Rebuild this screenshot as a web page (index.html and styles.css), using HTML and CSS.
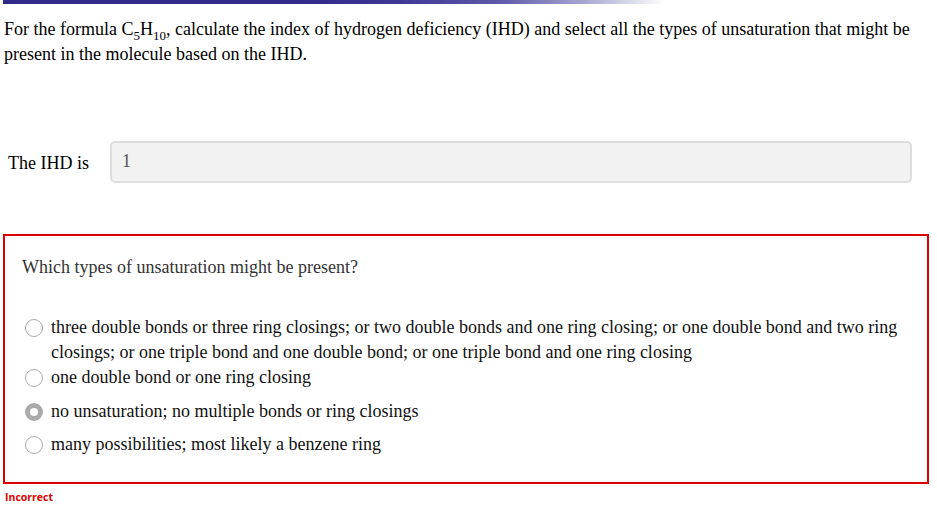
FILE: index.html
```html
<!DOCTYPE html>
<html>
<head>
<meta charset="utf-8">
<link rel="stylesheet" href="styles.css">
</head>
<body>
<div class="page">
  <div class="banner"></div>
  <p class="prompt">For the formula C<sub>5</sub>H<sub>10</sub>, calculate the index of hydrogen deficiency (IHD) and select all the types of unsaturation that might be present in the molecule based on the IHD.</p>
  <div class="ihd-row">
    <span class="ihd-label">The IHD is</span>
    <div class="ihd-input">1</div>
  </div>
  <div class="question">
    <div class="q-title">Which types of unsaturation might be present?</div>
    <ul class="options">
      <li class="option"><span class="radio"></span><span class="opt-text">three double bonds or three ring closings; or two double bonds and one ring closing; or one double bond and two ring closings; or one triple bond and one double bond; or one triple bond and one ring closing</span></li>
      <li class="option"><span class="radio"></span><span class="opt-text">one double bond or one ring closing</span></li>
      <li class="option spaced"><span class="radio checked"></span><span class="opt-text">no unsaturation; no multiple bonds or ring closings</span></li>
      <li class="option spaced"><span class="radio"></span><span class="opt-text">many possibilities; most likely a benzene ring</span></li>
    </ul>
  </div>
  <div class="feedback">Incorrect</div>
</div>
</body>
</html>
```
FILE: styles.css
```css
html, body {
  margin: 0;
  padding: 0;
  background: #fff;
}
body {
  font-family: "Liberation Serif", "Times New Roman", serif;
  font-size: 18px;
  color: #000;
}
.page {
  width: 937px;
  padding: 0 0 0 3px;
  box-sizing: border-box;
}
.banner {
  width: 662px;
  height: 4px;
  background: linear-gradient(to right, #302a8a 0%, #302a8a 45%, #3c3a95 60%, #5d5aa8 75%, #a9a8d2 88%, #ffffff 100%);
}
.prompt {
  margin: 13px 0 0 1px;
  line-height: 25px;
  width: 915px;
}
.prompt sub {
  font-size: 13px;
  vertical-align: -5px;
  line-height: 0;
}
.ihd-row {
  display: flex;
  align-items: center;
  margin-top: 74px;
  padding-left: 5px;
}
.ihd-label {
  width: 102px;
  flex: none;
  padding-top: 3px;
}
.ihd-input {
  width: 802px;
  height: 42px;
  box-sizing: border-box;
  background: #f2f2f2;
  border: 2px solid #dedede;
  border-radius: 5px;
  padding: 7px 0 0 10px;
  color: #555;
  line-height: 22px;
}
.question {
  margin-top: 51px;
  width: 926px;
  height: 250px;
  box-sizing: border-box;
  border: 2px solid #dd0000;
  padding: 19px 0 0 17px;
}
.q-title {
  color: #333;
  line-height: 25px;
}
.options {
  list-style: none;
  margin: 35px 0 0 0;
  padding: 0;
}
.option {
  display: flex;
  align-items: flex-start;
  line-height: 25px;
  color: #111;
}
.option.spaced {
  margin-top: 8.5px;
}
.radio {
  flex: none;
  width: 18px;
  height: 18px;
  box-sizing: border-box;
  border: 1.5px solid #aaa;
  border-radius: 50%;
  background: #fff;
  margin: 4px 8px 0 3px;
}
.radio.checked {
  border: 5.5px solid #aaa;
  background: #fff;
}
.opt-text {
  width: 860px;
}
.feedback {
  margin-top: 6px;
  padding-left: 2px;
  font-family: "Open Sans", "Liberation Sans", sans-serif;
  font-weight: 700;
  font-size: 10.5px;
  color: #dd0000;
}
```
